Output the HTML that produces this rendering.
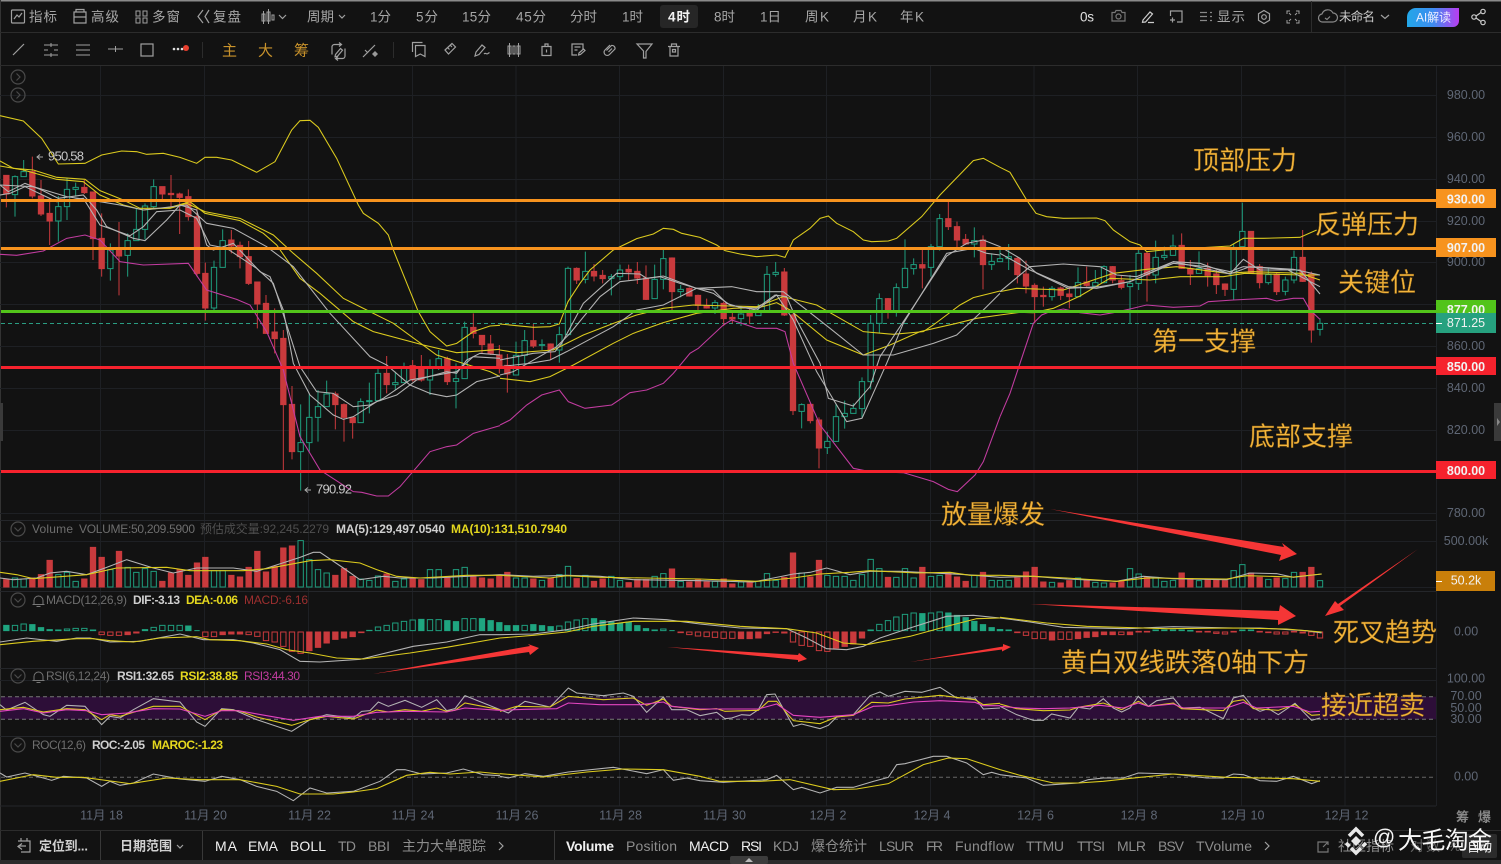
<!DOCTYPE html>
<html lang="zh"><head><meta charset="utf-8"><title>Chart</title>
<style>
html,body{margin:0;padding:0;background:#121212;overflow:hidden}
svg{display:block}
text{font-family:"Liberation Sans","Noto Sans CJK SC",sans-serif;font-size:12.5px;dominant-baseline:central}
.t{fill:#a6a6a6;font-size:13.5px}
.w{fill:#e8e8e8}
.ax{fill:#5f6775;font-size:12.5px;text-anchor:middle}
.tag{fill:#f2f2f2;font-size:12.5px;text-anchor:middle;font-weight:bold}
.lb{fill:#6e6e6e;font-size:12px}
.note{fill:#f3b53c;font-size:26px;font-family:"Noto Sans CJK SC","Liberation Sans",sans-serif;stroke:#8a5f14;stroke-width:.4px}
.b{fill:#8d8d8d;font-size:14px}
.bw{fill:#f0f0f0;font-size:14px}
.i{fill:none;stroke:#a0a0a0;stroke-width:1.2}
.gr{stroke:#1e2024;stroke-width:1;fill:none}
.r{fill:#c93a3d;stroke:#c93a3d;stroke-width:3}
.rh{fill:#121212;stroke:#c93a3d;stroke-width:3}
.gw{fill:none;stroke:#1f9d7d;stroke-width:3}
.gb{fill:#121212;stroke:#1f9d7d;stroke-width:3}
.gf{fill:#1fa580;stroke:#1fa580;stroke-width:3}
.ly{fill:none;stroke:#dccb1e;stroke-width:3.2}
.lw{fill:none;stroke:#b4b4b4;stroke-width:3.2}
.lm{fill:none;stroke:#c23ca0;stroke-width:3.2}
.lr{fill:none;stroke:#e445c0;stroke-width:3.2}
</style></head><body>
<svg width="1501" height="864" viewBox="0 0 1501 864" xmlns="http://www.w3.org/2000/svg">
<rect width="1501" height="864" fill="#121212"/>
<rect width="1501" height="1.5" fill="#8a8a8a"/>
<rect x="0" y="0" width="1" height="864" fill="#333"/>

<!-- grid -->
<path class="gr" d="M100.5 66V806M204.5 66V806M308.5 66V806M412.5 66V806M516 66V806M619.5 66V806M723.5 66V806M826.5 66V806M930.5 66V806M1034 66V806M1137.5 66V806M1241.5 66V806M1345 66V806"/>
<path class="gr" d="M0 95.5H1436M0 137.5H1436M0 179.5H1436M0 221.5H1436M0 262.5H1436M0 304.5H1436M0 346.5H1436M0 388.5H1436M0 430.5H1436M0 471.5H1436M0 513.5H1436M0 541.5H1436M0 587.5H1436M0 680.5H1436"/>
<path d="M0 520.5H1436M0 591.5H1436M0 668.5H1436M0 736.5H1436M0 806H1436" stroke="#24262a" fill="none"/>
<path d="M1436.5 66V806" stroke="#1e2024" fill="none"/>
<path d="M0 32.5H1501M0 65.5H1501M0 830.5H1501" stroke="#2c2c2c" fill="none"/>

<!-- RSI band -->
<rect x="1" y="696.7" width="1435" height="22.6" fill="#2d0e38"/>
<path d="M1 696.7H1436M1 719.3H1436" stroke="#777" stroke-dasharray="4 3" fill="none"/>
<path d="M1 777.3H1436" stroke="#666" stroke-dasharray="4 3" fill="none"/>
<path d="M1 323.5H1436" stroke="#2a9d82" stroke-dasharray="4 3" fill="none"/>

<!-- Zone A: x 0-500 y 70 -->
<g transform="translate(0,70) scale(.33333)">
<path class="r" d="M19 316V412M11 316h16v56h-16zM97 260V385M89 305h16v73h-16zM123 330V438M115 378h16v54h-16zM149 395V525M141 430h16v23h-16zM253 330V372M245 352h16v16h-16zM279 366V570M271 366h16v140h-16zM305 430V620M297 505h16v91h-16zM357 456V676M349 540h16v18h-16zM487 350V395M479 350h16v22h-16zM513 315V410M505 370h16v4h-16zM539 368V492M531 372h16v10h-16zM565 358V452M557 380h16v60h-16zM591 415V620M583 440h16v170h-16zM616 578V752M608 610h16v104h-16zM694 480V550M686 510h16v18h-16zM720 515V595M712 526h16v34h-16zM746 513V645M738 560h16v80h-16zM772 636V775M764 636h16v66h-16zM798 675V792M790 700h16v90h-16zM824 715V850M816 786h16v20h-16zM850 780V1200M842 805h16v199h-16zM876 948V1168M868 1003h16v142h-16zM1006 965V1078M998 972h16v32h-16zM1032 1000V1115M1024 1004h16v38h-16zM1058 1040V1106M1050 1042h16v16h-16zM1160 858V970M1152 910h16v34h-16zM1238 870V935M1230 887h16v43h-16zM1264 855V935M1256 895h16v35h-16zM1342 860V945M1334 866h16v69h-16zM1420 730V805M1412 772h16v18h-16zM1446 796V850M1438 796h16v28h-16zM1472 795V855M1464 822h16v28h-16zM1498 825V910M1490 855h16v40h-16z"/>
<path class="gw" d="M45 316V440M71 270V320M175 378V515M201 325V450M227 338V380M331 520V632M383 490V620M409 415V512M435 400V508M461 328V415M642 572V720M668 478V592M902 1003V1262M928 972V1145M954 960V1115M980 932V1010M1082 985V1058M1108 938V1030M1134 895V992M1186 905V960M1212 878V938M1290 868V975M1316 840V900M1368 880V1015M1394 755V926"/>
<path class="gb" d="M37 320h16v54h-16zM63 305h16v15h-16zM167 410h16v43h-16zM193 358h16v52h-16zM219 352h16v6h-16zM323 540h16v56h-16zM375 512h16v44h-16zM401 478h16v34h-16zM427 408h16v70h-16zM453 350h16v60h-16zM634 592h16v122h-16zM660 512h16v80h-16zM894 1118h16v27h-16zM920 1042h16v76h-16zM946 1010h16v32h-16zM972 972h16v38h-16zM1074 995h16v63h-16zM1100 992h16v3h-16zM1126 910h16v82h-16zM1178 938h16v6h-16zM1204 895h16v43h-16zM1282 895h16v35h-16zM1308 866h16v29h-16zM1360 926h16v8h-16zM1386 772h16v154h-16z"/>
<polyline class="lm" points="0,553 50,556 130,543 200,505 255,495 300,510 360,575 430,585 565,580 620,660 710,688 750,705 800,785 850,900 900,1100 960,1200 1060,1265 1085,1267 1130,1278 1165,1278 1200,1250 1290,1145 1340,1130 1370,1125 1420,1090 1500,1067"/>
<polyline class="ly" points="0,137 70,153 125,205 175,282 255,280 305,255 365,243 410,245 440,253 490,250 540,262 590,280 615,262 650,262 695,270 770,307 825,275 875,180 900,152 930,151 955,172 1010,265 1075,405 1090,430 1135,460 1165,495 1180,540 1255,725 1290,785 1340,828 1370,820 1420,785 1470,768 1500,766"/>
<polyline class="ly" points="0,273 40,295 100,300 170,322 255,328 300,362 370,390 420,415 510,415 560,400 615,425 720,445 760,465 820,495 880,550 950,610 1030,685 1100,720 1180,760 1310,855 1390,880 1470,905 1500,920"/>
<polyline class="ly" points="0,288 70,300 170,328 250,335 300,375 370,405 430,420 510,412 570,395 615,430 720,452 790,490 830,525 900,625 960,670 1060,755 1120,785 1270,825 1370,848 1500,838"/>
<polyline class="lw" points="0,345 25,365 75,340 125,360 175,385 250,375 290,420 320,470 400,505 435,512 500,450 540,405 590,420 620,525 640,540 700,520 780,605 810,620 850,720 880,880 930,975 1000,1035 1030,1048 1060,1040 1130,995 1190,975 1250,930 1340,905 1370,910 1400,870 1440,850 1500,855"/>
<polyline class="lw" points="0,375 30,370 75,350 170,395 250,385 300,465 390,497 430,470 470,425 540,420 590,445 630,525 680,535 770,595 820,640 900,890 950,965 1000,970 1060,1010 1110,1005 1150,985 1230,930 1340,910 1370,905 1420,860 1500,865"/>
<polyline class="lw" points="0,345 100,350 200,380 300,395 360,405 430,420 560,405 620,460 700,475 800,530 880,590 990,730 1110,860 1160,885 1230,945 1290,970 1340,980 1370,975 1430,935 1500,918"/>
</g>

<!-- Zone B: x 500-1000 y 70 -->
<g transform="translate(500,70) scale(.33333)">
<path class="r" d="M22 852V968M14 886h16v26h-16zM100 762V834M92 812h16v16h-16zM152 820V870M144 822h16v18h-16zM230 592V642M222 595h16v35h-16zM282 582V634M274 604h16v14h-16zM308 600V640M300 616h16v10h-16zM386 584V630M378 598h16v8h-16zM412 576V642M404 604h16v20h-16zM438 586V690M430 624h16v64h-16zM516 562V720M508 564h16v101h-16zM568 652V680M560 655h16v23h-16zM594 674V720M586 676h16v30h-16zM620 686V716M612 708h16v6h-16zM671 695V768M663 700h16v46h-16zM697 725V760M689 742h16v5h-16zM749 712V762M741 730h16v8h-16zM853 594V738M845 606h16v129h-16zM879 730V1035M871 735h16v287h-16zM931 1000V1060M923 1003h16v49h-16zM957 1042V1195M949 1050h16v84h-16zM1164 684V746M1156 686h16v36h-16zM1267 540V655M1259 584h16v10h-16zM1345 396V480M1337 446h16v24h-16zM1371 455V535M1363 470h16v40h-16zM1397 492V525M1389 508h16v14h-16zM1449 496V658M1441 510h16v74h-16z"/>
<path class="gw" d="M48 815V915M74 780V880M126 808V840M178 770V878M204 590V794M256 545V640M334 612V676M360 584V630M464 584V686M490 540V658M542 645V682M645 690V732M723 712V768M775 702V737M801 588V722M827 576V620M905 1000V1075M982 1085V1152M1008 1000V1114M1034 992V1076M1060 1000V1030M1086 922V1045M1112 735V958M1138 670V790M1189 640V740M1215 508V653M1241 565V614M1293 522V620M1319 432V542M1423 472V562M1475 550V600"/>
<path class="gb" d="M40 856h16v59h-16zM66 812h16v44h-16zM118 824h16v2h-16zM170 794h16v46h-16zM196 595h16v199h-16zM248 604h16v24h-16zM326 620h16v5h-16zM352 600h16v20h-16zM456 628h16v58h-16zM482 566h16v62h-16zM534 658h16v7h-16zM637 698h16v16h-16zM715 732h16v14h-16zM767 722h16v15h-16zM793 613h16v109h-16zM819 607h16v6h-16zM897 1004h16v20h-16zM974 1114h16v19h-16zM1000 1040h16v74h-16zM1026 1030h16v10h-16zM1052 1015h16v15h-16zM1078 935h16v81h-16zM1104 760h16v175h-16zM1130 686h16v74h-16zM1181 653h16v69h-16zM1207 595h16v58h-16zM1233 584h16v12h-16zM1285 530h16v62h-16zM1311 446h16v84h-16zM1415 512h16v10h-16zM1467 574h16v10h-16z"/>
<polyline class="lm" points="0,1065 30,1050 80,1005 125,975 178,960 205,995 255,1015 335,1005 390,968 440,960 490,940 520,910 570,850 595,835 670,765 695,750 770,775 830,775 855,785 880,880 960,1065 1060,1195 1110,1205 1210,1208 1300,1235 1345,1258 1372,1265 1425,1215 1450,1175 1500,1040"/>
<polyline class="ly" points="0,762 100,772 150,770 178,762 204,695 240,640 270,600 340,540 410,506 460,492 490,475 520,478 545,490 600,502 650,525 675,542 720,552 770,560 830,555 855,562 880,510 930,475 960,445 985,438 1010,460 1060,485 1090,510 1115,515 1165,513 1190,505 1265,440 1320,375 1420,272 1450,265 1500,292"/>
<polyline class="ly" points="0,840 50,848 160,840 250,795 340,760 410,735 490,715 580,705 770,710 850,680 950,705 1090,785 1180,793 1270,785 1300,765 1380,705 1420,683 1500,663"/>
<polyline class="ly" points="0,925 90,935 150,920 220,885 340,820 400,790 490,758 590,730 700,715 780,712 830,698 870,720 980,810 1090,855 1170,825 1260,785 1370,760 1430,745 1500,735"/>
<polyline class="lw" points="0,870 100,850 165,845 185,820 250,700 350,610 420,612 440,625 490,618 590,655 640,660 680,700 720,712 770,715 825,675 860,680 890,750 960,880 985,985 1060,1008 1110,950 1140,860 1240,710 1340,558 1400,520 1450,510 1500,530"/>
<polyline class="lw" points="0,915 40,905 170,830 210,790 300,680 360,635 420,628 480,620 540,640 640,670 690,705 770,720 830,675 880,750 950,905 1040,1055 1086,1045 1160,880 1210,760 1340,550 1420,535 1460,550 1500,555"/>
<polyline class="lw" points="0,890 90,880 150,870 200,845 340,770 410,720 490,705 590,655 695,650 770,665 850,665 990,775 1090,855 1180,855 1300,820 1370,795 1450,720 1500,670"/>
</g>

<!-- Zone C: x 1000+ y 70 -->
<g transform="translate(1000,70) scale(.33333)">
<path class="r" d="M52 560V640M44 565h16v49h-16zM78 572V670M70 612h16v36h-16zM104 640V760M96 646h16v34h-16zM130 650V710M122 676h16v4h-16zM182 650V690M174 654h16v22h-16zM208 650V715M200 672h16v8h-16zM260 590V650M252 636h16v10h-16zM338 588V640M330 590h16v40h-16zM364 615V658M356 632h16v20h-16zM441 545V695M433 550h16v65h-16zM545 490V597M537 526h16v69h-16zM571 570V645M563 596h16v16h-16zM623 578V650M615 596h16v20h-16zM649 600V672M641 612h16v32h-16zM675 640V678M667 642h16v16h-16zM753 484V612M745 484h16v126h-16zM779 582V655M771 590h16v48h-16zM830 606V675M822 612h16v53h-16zM908 480V636M900 562h16v72h-16zM934 605V818M926 612h16v168h-16z"/>
<path class="gw" d="M0 530V575M26 522V600M156 648V692M234 592V680M286 600V650M312 586V640M390 615V762M416 540V660M467 512V640M493 530V570M519 494V556M597 544V610M701 520V690M727 398V530M805 595V644M856 620V676M882 542V640M960 745V797"/>
<path class="gb" d="M-8 566h16v9h-16zM18 560h16v6h-16zM148 655h16v25h-16zM226 638h16v42h-16zM278 638h16v10h-16zM304 590h16v48h-16zM382 640h16v10h-16zM408 550h16v90h-16zM459 562h16v53h-16zM485 556h16v6h-16zM511 528h16v28h-16zM589 596h16v14h-16zM693 532h16v126h-16zM719 484h16v46h-16zM797 614h16v24h-16zM848 630h16v34h-16zM874 562h16v68h-16zM952 760h16v18h-16z"/>
<polyline class="lm" points="0,1040 30,970 60,880 100,760 125,735 150,725 190,717 240,728 300,735 340,728 390,717 440,705 520,712 600,708 625,695 700,690 800,685 830,693 880,685 910,685 930,720 960,748"/>
<polyline class="ly" points="0,292 30,307 80,390 108,430 140,440 190,445 290,444 315,452 340,480 390,515 420,525 440,545 490,540 690,528 730,505 790,505 900,502 950,480"/>
<polyline class="ly" points="0,665 50,655 190,660 250,640 340,610 440,598 530,590 680,610 760,605 900,610 960,630"/>
<polyline class="ly" points="0,735 60,727 100,728 160,715 240,678 330,625 450,630 540,620 670,620 735,610 900,615 960,615"/>
<polyline class="lw" points="0,530 60,565 110,610 205,655 300,650 390,635 470,600 520,575 600,580 690,612 730,568 780,600 860,600 900,600 960,672"/>
<polyline class="lw" points="0,550 90,600 205,650 290,655 390,635 520,580 620,590 690,605 730,590 860,598 960,650"/>
<polyline class="lw" points="0,665 90,590 190,582 300,590 350,615 410,620 520,575 690,612 750,590 880,598 960,615"/>
</g>

<!-- horizontal key levels -->
<rect x="1" y="199" width="1435" height="3" fill="#f7931e"/>
<rect x="1" y="247" width="1435" height="3" fill="#f7931e"/>
<rect x="1" y="310" width="1435" height="3" fill="#52c41a"/>
<rect x="1" y="366" width="1435" height="3" fill="#f5222d"/>
<rect x="1" y="470" width="1435" height="3" fill="#f5222d"/>

<!-- lower panes left -->
<g transform="translate(0,518) scale(.33333)">
<path class="r" d="M11 185h16V207H11zM89 180h16V207H89zM115 170h16V207H115zM141 127h16V207H141zM245 183h16V207H245zM271 88h16V207H271zM297 118h16V207H297zM349 100h16V207H349zM479 190h16V207H479zM505 165h16V207H505zM531 155h16V207H531zM557 172h16V207H557zM583 135h16V207H583zM608 118h16V207H608zM686 172h16V207H686zM712 177h16V207H712zM738 148h16V207H738zM764 100h16V207H764zM790 162h16V207H790zM816 145h16V207H816zM842 90h16V207H842zM868 84h16V207H868zM998 172h16V207H998zM1024 152h16V207H1024zM1050 175h16V207H1050zM1152 168h16V207H1152zM1230 183h16V207H1230zM1256 185h16V207H1256zM1334 177h16V207H1334zM1412 177h16V207H1412zM1438 180h16V207H1438zM1464 183h16V207H1464zM1490 172h16V207H1490z"/>
<path class="gb" d="M37 180h16V207H37zM63 183h16V207H63zM167 170h16V207H167zM193 163h16V207H193zM219 190h16V207H219zM323 155h16V207H323zM375 148h16V207H375zM401 163h16V207H401zM427 152h16V207H427zM453 160h16V207H453zM634 158h16V207H634zM660 158h16V207H660zM894 68h16V207H894zM920 125h16V207H920zM946 155h16V207H946zM972 165h16V207H972zM1074 183h16V207H1074zM1100 187h16V207H1100zM1126 174h16V207H1126zM1178 190h16V207H1178zM1204 183h16V207H1204zM1282 155h16V207H1282zM1308 155h16V207H1308zM1360 155h16V207H1360zM1386 148h16V207H1386z"/>
<polyline class="lw" points="0,180 40,185 110,180 150,165 200,160 260,170 320,148 380,125 460,150 520,165 590,150 700,150 770,160 900,118 940,103 960,103 1030,150 1080,185 1150,175 1200,180 1300,180 1500,170"/>
<polyline class="ly" points="0,163 50,170 100,182 260,170 350,150 500,148 570,158 730,158 800,152 930,128 990,125 1080,135 1130,155 1190,175 1260,180 1400,172 1500,172"/>
<!-- MACD -->
<path class="gf" d="M11 322h16V338H11zM89 320h16V338H89zM115 329h16V338H115zM141 335h16V338H141zM167 336h16V338H167zM271 336h16V338H271zM427 335h16V338H427zM557 324h16V338H557zM583 338h16V338H583zM1100 337h16V338H1100zM1256 304h16V338H1256zM1334 308h16V338H1334zM1360 311h16V338H1360zM1438 302h16V338H1438zM1464 308h16V338H1464zM1490 314h16V338H1490z"/>
<path class="gb" d="M37 322h16V338H37zM63 318h16V338H63zM193 333h16V338H193zM219 331h16V338H219zM245 331h16V338H245zM453 328h16V338H453zM479 322h16V338H479zM505 322h16V338H505zM531 322h16V338H531zM1126 327h16V338H1126zM1152 322h16V338H1152zM1178 315h16V338H1178zM1204 310h16V338H1204zM1230 306h16V338H1230zM1282 305h16V338H1282zM1308 305h16V338H1308zM1386 302h16V338H1386zM1412 302h16V338H1412z"/>
<path class="rh" d="M297 342h16V350H297zM323 342h16V352H323zM349 342h16V352H349zM608 342h16V356H608zM634 342h16V356H634zM738 342h16V350H738zM764 342h16V355H764zM790 342h16V368H790zM816 342h16V372H816zM842 342h16V385H842zM868 342h16V400H868zM894 342h16V406H894z"/>
<path class="r" d="M375 342h16V350H375zM401 342h16V345H401zM660 342h16V350H660zM686 342h16V348H686zM712 342h16V348H712zM920 342h16V398H920zM946 342h16V388H946zM972 342h16V375H972zM998 342h16V364H998zM1024 342h16V360H1024zM1050 342h16V356H1050zM1076 342h16V344H1076z"/>
<polyline class="lw" points="0,372 80,360 170,370 230,360 270,360 330,372 420,370 540,348 610,365 700,365 760,375 840,395 900,430 960,432 1080,424 1240,385 1340,372 1440,350 1500,350"/>
<polyline class="ly" points="0,380 100,370 230,362 280,362 330,368 400,372 480,360 590,356 630,365 720,368 800,378 860,395 930,405 1010,420 1090,423 1230,405 1340,388 1500,360"/>
<!-- RSI -->
<polyline class="lw" points="0,560 20,576 75,553 130,590 150,595 200,562 255,565 305,620 330,595 360,600 400,575 460,542 540,552 590,612 615,625 665,572 700,575 770,605 875,640 930,605 980,590 1060,600 1085,580 1110,578 1135,552 1165,565 1215,547 1265,568 1310,545 1340,578 1365,572 1395,533 1500,575"/>
<polyline class="ly" points="0,575 70,568 130,582 200,572 255,575 305,605 330,590 360,595 460,565 540,565 615,605 665,575 715,578 770,597 875,622 930,605 980,595 1060,603 1130,576 1165,582 1215,575 1265,580 1310,570 1340,580 1365,577 1395,555 1500,575"/>
<polyline class="lr" points="0,580 70,572 130,585 200,575 260,578 305,590 380,585 460,572 540,573 615,595 665,578 715,578 880,607 960,595 1060,595 1130,583 1215,580 1340,582 1395,570 1500,577"/>
<!-- ROC -->
<polyline class="lw" points="0,765 20,777 75,765 130,780 155,787 190,775 260,780 305,805 330,790 360,802 400,795 460,768 540,783 615,790 665,775 720,785 770,805 830,820 880,848 930,810 980,825 1060,820 1140,790 1190,755 1215,755 1265,768 1340,765 1390,753 1450,770 1500,773"/>
<polyline class="ly" points="0,790 100,770 170,778 250,778 390,797 500,780 600,785 720,785 830,805 900,828 1000,828 1060,822 1130,812 1220,772 1290,763 1350,768 1440,762 1500,768"/>
</g>

<!-- lower panes mid -->
<g transform="translate(500,518) scale(.33333)">
<path class="r" d="M14 163h16V207H14zM92 183h16V207H92zM144 180h16V207H144zM222 182h16V207H222zM274 190h16V207H274zM300 183h16V207H300zM378 194h16V207H378zM404 185h16V207H404zM430 185h16V207H430zM508 153h16V207H508zM560 192h16V207H560zM586 186h16V207H586zM612 192h16V207H612zM663 183h16V207H663zM689 198h16V207H689zM741 194h16V207H741zM845 178h16V207H845zM871 105h16V207H871zM923 177h16V207H923zM949 127h16V207H949zM1156 178h16V207H1156zM1259 148h16V207H1259zM1337 165h16V207H1337zM1363 177h16V207H1363zM1389 190h16V207H1389zM1441 163h16V207H1441z"/>
<path class="gb" d="M40 180h16V207H40zM66 180h16V207H66zM118 187h16V207H118zM170 170h16V207H170zM196 145h16V207H196zM248 172h16V207H248zM326 175h16V207H326zM352 187h16V207H352zM456 175h16V207H456zM482 167h16V207H482zM534 190h16V207H534zM637 190h16V207H637zM715 192h16V207H715zM767 190h16V207H767zM793 167h16V207H793zM819 187h16V207H819zM897 165h16V207H897zM974 172h16V207H974zM1000 175h16V207H1000zM1026 175h16V207H1026zM1052 187h16V207H1052zM1078 170h16V207H1078zM1104 124h16V207H1104zM1130 152h16V207H1130zM1181 178h16V207H1181zM1207 152h16V207H1207zM1233 180h16V207H1233zM1285 175h16V207H1285zM1311 172h16V207H1311zM1415 172h16V207H1415zM1467 187h16V207H1467zM1492 187h16V207H1492z"/>
<polyline class="lw" points="0,170 100,175 200,172 300,175 400,185 600,188 760,192 880,168 930,163 980,150 1050,170 1110,160 1200,160 1400,170 1500,178"/>
<polyline class="ly" points="0,172 150,180 200,173 300,178 440,180 600,183 770,190 880,180 960,168 1050,163 1110,158 1250,165 1350,163 1410,172 1500,172"/>
<!-- MACD -->
<path class="gf" d="M14 323h16V338H14zM40 323h16V338H40zM92 320h16V338H92zM118 323h16V338H118zM144 326h16V338H144zM274 302h16V338H274zM300 308h16V338H300zM326 312h16V338H326zM352 316h16V338H352zM378 312h16V338H378zM404 323h16V338H404zM430 332h16V338H430zM456 336h16V338H456zM508 338h16V338H508zM1104 336h16V338H1104zM1259 287h16V338H1259zM1337 285h16V338H1337zM1363 292h16V338H1363zM1389 299h16V338H1389zM1415 310h16V338H1415zM1441 320h16V338H1441zM1467 329h16V338H1467zM1492 335h16V338H1492z"/>
<path class="gb" d="M66 322h16V338H66zM170 324h16V338H170zM196 312h16V338H196zM222 306h16V338H222zM248 302h16V338H248zM482 333h16V338H482zM1130 319h16V338H1130zM1156 308h16V338H1156zM1181 297h16V338H1181zM1207 289h16V338H1207zM1233 285h16V338H1233zM1285 285h16V338H1285zM1311 282h16V338H1311z"/>
<path class="rh" d="M560 342h16V350H560zM586 342h16V354H586zM612 342h16V356H612zM637 342h16V358H637zM663 342h16V361H663zM689 342h16V361H689zM845 342h16V345H845zM871 342h16V372H871zM897 342h16V382H897zM923 342h16V385H923zM949 342h16V398H949zM974 342h16V400H974z"/>
<path class="r" d="M534 342h16V344H534zM715 342h16V362H715zM741 342h16V362H741zM767 342h16V360H767zM793 342h16V347H793zM819 342h16V343H819zM1000 342h16V390H1000zM1026 342h16V385H1026zM1052 342h16V378H1052zM1078 342h16V360H1078z"/>
<polyline class="lw" points="0,350 100,348 200,335 280,318 400,300 500,305 600,318 720,330 860,332 920,360 980,392 1040,395 1090,385 1140,360 1230,330 1340,295 1420,292 1500,300"/>
<polyline class="ly" points="0,360 100,352 200,342 280,325 400,310 560,310 720,325 860,332 950,345 1030,375 1100,380 1230,355 1340,325 1430,302 1500,300"/>
<!-- RSI -->
<polyline class="lw" points="0,575 25,585 75,550 150,567 205,510 230,525 310,533 370,525 400,535 440,583 490,537 515,575 560,575 600,593 650,583 675,602 695,600 725,590 750,592 775,575 800,530 825,528 880,625 905,618 960,632 985,622 1010,597 1060,590 1110,533 1140,522 1165,535 1215,520 1265,523 1320,508 1370,540 1425,540 1450,573 1500,570"/>
<polyline class="ly" points="0,580 50,565 150,567 205,535 310,545 400,540 440,562 490,543 515,565 600,575 650,572 675,580 775,577 805,550 830,550 880,608 960,617 1010,597 1060,592 1115,553 1165,555 1215,543 1320,532 1425,545 1450,560 1500,556"/>
<polyline class="lr" points="0,577 75,574 170,572 205,555 300,560 420,560 490,552 515,565 600,573 775,573 830,558 880,592 960,598 1060,590 1120,565 1165,563 1240,552 1320,548 1425,553 1450,563 1500,563"/>
<!-- ROC -->
<polyline class="lw" points="0,775 25,780 75,767 130,775 205,762 340,748 440,767 490,755 520,787 560,780 600,788 670,793 800,785 830,772 880,815 905,808 960,825 1010,808 1060,808 1120,790 1165,778 1190,740 1215,737 1300,715 1340,715 1400,735 1450,770 1475,763 1500,770"/>
<polyline class="ly" points="0,767 130,777 260,762 370,753 490,755 600,775 660,790 780,790 870,785 1000,815 1070,813 1165,797 1270,740 1345,720 1400,722 1500,755"/>
</g>

<!-- lower panes right -->
<g transform="translate(1000,518) scale(.33333)">
<path class="r" d="M44 180h16V207H44zM70 162h16V207H70zM96 148h16V207H96zM122 192h16V207H122zM174 195h16V207H174zM200 188h16V207H200zM252 185h16V207H252zM330 195h16V207H330zM356 190h16V207H356zM433 178h16V207H433zM537 165h16V207H537zM563 182h16V207H563zM615 185h16V207H615zM641 185h16V207H641zM667 188h16V207H667zM745 165h16V207H745zM771 178h16V207H771zM822 180h16V207H822zM900 163h16V207H900zM926 148h16V207H926z"/>
<path class="gb" d="M18 187h16V207H18zM148 193h16V207H148zM226 180h16V207H226zM278 193h16V207H278zM304 195h16V207H304zM382 152h16V207H382zM408 168h16V207H408zM459 178h16V207H459zM485 190h16V207H485zM511 187h16V207H511zM589 188h16V207H589zM693 158h16V207H693zM719 140h16V207H719zM797 184h16V207H797zM848 182h16V207H848zM874 163h16V207H874zM952 188h16V207H952z"/>
<polyline class="lw" points="0,178 100,175 200,183 350,190 430,175 520,182 680,185 750,165 830,167 880,178 965,168"/>
<polyline class="ly" points="0,172 100,175 200,180 350,190 440,180 680,183 740,173 880,177 965,168"/>
<!-- MACD -->
<path class="gf" d="M-8 335h16V338H-8zM18 336h16V338H18zM459 336h16V338H459zM485 336h16V338H485zM511 336h16V338H511zM537 336h16V338H537zM563 337h16V339H563zM719 336h16V338H719zM745 336h16V338H745z"/>
<path class="rh" d="M44 342h16V344H44zM70 342h16V352H70zM96 342h16V362H96zM122 342h16V362H122zM174 342h16V364H174zM200 342h16V364H200zM356 342h16V350H356zM641 342h16V346H641zM667 342h16V348H667zM822 342h16V348H822zM848 342h16V348H848zM926 342h16V352H926zM952 342h16V360H952z"/>
<path class="r" d="M148 342h16V366H148zM226 342h16V362H226zM252 342h16V358H252zM278 342h16V356H278zM304 342h16V350H304zM330 342h16V350H330zM382 342h16V350H382zM408 340h16V342H408zM433 340h16V342H433zM589 340h16V342H589zM615 340h16V342H615zM693 340h16V342H693zM771 340h16V342H771zM797 342h16V344H797zM874 340h16V342H874zM900 342h16V345H900z"/>
<polyline class="lw" points="0,300 90,312 190,328 380,332 520,326 700,330 780,330 920,338 965,345"/>
<polyline class="ly" points="0,298 140,315 260,325 500,332 700,330 860,333 965,342"/>
<!-- RSI -->
<polyline class="lw" points="0,565 50,590 100,607 130,607 155,588 210,600 235,568 270,573 310,542 340,570 365,582 390,570 415,535 445,565 470,548 520,540 545,570 600,568 670,602 700,540 730,532 760,570 780,580 805,572 835,590 885,556 935,607 960,600"/>
<polyline class="ly" points="0,558 50,572 130,578 210,576 235,568 310,555 365,575 415,550 445,565 520,555 545,572 670,578 700,550 730,545 760,572 835,577 885,560 935,592 960,590"/>
<polyline class="lr" points="0,565 60,570 130,572 210,570 300,562 370,570 415,555 445,565 520,558 550,570 680,570 730,553 770,570 880,565 930,582 960,580"/>
<!-- ROC -->
<polyline class="lw" points="0,770 80,780 130,802 235,795 265,785 310,780 370,780 415,765 520,768 620,780 670,780 700,768 730,770 780,788 830,790 880,775 935,797 960,788"/>
<polyline class="ly" points="0,755 60,772 160,795 235,795 310,790 420,778 520,768 680,778 880,782 960,790"/>
</g>

<!-- red arrows -->
<g fill="#f53636">
<polygon points="1050,509 1284,547 1282,543 1297,554 1279,561 1281,555"/>
<polygon points="1030,604 1279,611 1280,605 1296,616 1278,625 1278,620"/>
<polygon points="1418,549 1340,606 1344,610 1325,616 1335,601 1338,604"/>
<polygon points="373,674 530,646 528,644 539,648 530,655 529,652"/>
<polygon points="667,647 798,655 799,653 807,659 798,662 798,660"/>
<polygon points="910,662 1003,646.500 1003,644 1011,647 1002,651.500 1002,649.500"/>
</g>

<!-- price extremes -->
<path d="M43 157H37M40 154.5l-3 2.5 3 2.5" fill="none" stroke="#aaa"/>
<text x="48" y="156" fill="#c8c8c8" textLength="36" style="font-size:13px">950.58</text>
<path d="M311 490H305M308 487.5l-3 2.5 3 2.5" fill="none" stroke="#aaa"/>
<text x="316" y="489" fill="#c8c8c8" textLength="36" style="font-size:13px">790.92</text>

<!-- circle buttons -->
<g fill="none" stroke="#4a4a4a" stroke-width="1.2">
<circle cx="18" cy="77" r="7"/><path d="M16.5 73.5l3.5 3.5-3.5 3.5"/>
<circle cx="18" cy="95" r="7"/><path d="M16.5 91.5l3.5 3.5-3.5 3.5"/>
<circle cx="18" cy="529" r="7"/><path d="M14.5 527.5l3.5 3.5 3.5-3.5"/>
<circle cx="18" cy="600" r="7"/><path d="M14.5 598.5l3.5 3.5 3.5-3.5"/>
<circle cx="18" cy="676" r="7"/><path d="M14.5 674.5l3.5 3.5 3.5-3.5"/>
<circle cx="18" cy="745" r="7"/><path d="M14.5 743.5l3.5 3.5 3.5-3.5"/>
</g>
<g fill="none" stroke="#777" stroke-width="1">
<path d="M32.500 604.500h12M34 604.500v-4a4.500 4.500 0 0 1 9 0v4M36.500 606.500h4"/>
<path d="M32.500 680.500h12M34 680.500v-4a4.500 4.500 0 0 1 9 0v4M36.500 682.500h4"/>
</g>

<!-- pane labels -->
<text class="lb" x="32" y="529" textLength="41">Volume</text>
<text class="lb" x="79" y="529" textLength="116">VOLUME:50,209.5900</text>
<text class="lb" x="200" y="529" textLength="129" style="fill:#4f4f4f">预估成交量:92,245.2279</text>
<text class="lb" x="336" y="529" textLength="109" style="fill:#cfcfcf;font-weight:bold">MA(5):129,497.0540</text>
<text class="lb" x="451" y="529" textLength="116" style="fill:#e5d81e;font-weight:bold">MA(10):131,510.7940</text>
<text class="lb" x="46" y="600" textLength="81">MACD(12,26,9)</text>
<text class="lb" x="133" y="600" textLength="47" style="fill:#cfcfcf;font-weight:bold">DIF:-3.13</text>
<text class="lb" x="186" y="600" textLength="52" style="fill:#e5d81e;font-weight:bold">DEA:-0.06</text>
<text class="lb" x="244" y="600" textLength="64" style="fill:#9c2f2f">MACD:-6.16</text>
<text class="lb" x="46" y="676" textLength="64">RSI(6,12,24)</text>
<text class="lb" x="117" y="676" textLength="57" style="fill:#cfcfcf;font-weight:bold">RSI1:32.65</text>
<text class="lb" x="180" y="676" textLength="58" style="fill:#e5d81e;font-weight:bold">RSI2:38.85</text>
<text class="lb" x="244" y="676" textLength="56" style="fill:#c23ca0">RSI3:44.30</text>
<text class="lb" x="32" y="745" textLength="54">ROC(12,6)</text>
<text class="lb" x="92" y="745" textLength="53" style="fill:#cfcfcf;font-weight:bold">ROC:-2.05</text>
<text class="lb" x="152" y="745" textLength="71" style="fill:#e5d81e;font-weight:bold">MAROC:-1.23</text>

<!-- right axis -->
<text class="ax" x="1466" y="95">980.00</text>
<text class="ax" x="1466" y="137">960.00</text>
<text class="ax" x="1466" y="179">940.00</text>
<text class="ax" x="1466" y="221">920.00</text>
<text class="ax" x="1466" y="262">900.00</text>
<text class="ax" x="1466" y="346">860.00</text>
<text class="ax" x="1466" y="388">840.00</text>
<text class="ax" x="1466" y="430">820.00</text>
<text class="ax" x="1466" y="513">780.00</text>
<text class="ax" x="1466" y="541">500.00k</text>
<text class="ax" x="1466" y="631.500">0.00</text>
<text class="ax" x="1466" y="678.500">100.00</text>
<text class="ax" x="1466" y="696">70.00</text>
<text class="ax" x="1466" y="708">50.00</text>
<text class="ax" x="1466" y="719">30.00</text>
<text class="ax" x="1466" y="776.500">0.00</text>

<rect x="1436" y="189" width="60" height="19" fill="#f7931e"/><text class="tag" x="1466" y="199.500">930.00</text>
<rect x="1436" y="238" width="60" height="19" fill="#f7931e"/><text class="tag" x="1466" y="248">907.00</text>
<rect x="1436" y="300" width="60" height="14" fill="#52c41a"/><text class="tag" x="1466" y="310">877.00</text>
<rect x="1436" y="313" width="60" height="20" fill="#26a17f"/><text class="tag" x="1466" y="323" style="font-weight:normal">871.25</text>
<path d="M1436 323.500h6" stroke="#fff"/>
<rect x="1436" y="357" width="60" height="18" fill="#f5222d"/><text class="tag" x="1466" y="367">850.00</text>
<rect x="1436" y="461" width="60" height="18" fill="#f5222d"/><text class="tag" x="1466" y="471">800.00</text>
<rect x="1436" y="571" width="59" height="20" fill="#c97f0a"/><text class="tag" x="1466" y="580.500" style="font-weight:normal">50.2k</text>
<path d="M1436 581.500h6" stroke="#fff"/>

<!-- time axis -->
<g>
<text class="ax" x="101.500" y="815.500">11月 18</text>
<text class="ax" x="205.500" y="815.500">11月 20</text>
<text class="ax" x="309.500" y="815.500">11月 22</text>
<text class="ax" x="413" y="815.500">11月 24</text>
<text class="ax" x="517" y="815.500">11月 26</text>
<text class="ax" x="620.500" y="815.500">11月 28</text>
<text class="ax" x="724.500" y="815.500">11月 30</text>
<text class="ax" x="828" y="815.500">12月 2</text>
<text class="ax" x="932" y="815.500">12月 4</text>
<text class="ax" x="1035.500" y="815.500">12月 6</text>
<text class="ax" x="1139" y="815.500">12月 8</text>
<text class="ax" x="1242.500" y="815.500">12月 10</text>
<text class="ax" x="1346.500" y="815.500">12月 12</text>
</g>
<text x="1456" y="817" fill="#8a8a8a" style="font-size:13px;font-weight:bold">筹</text>
<text x="1478" y="817" fill="#8a8a8a" style="font-size:13px;font-weight:bold">爆</text>

<!-- annotations -->
<text class="note" x="1193" y="159" textLength="104">顶部压力</text>
<text class="note" x="1315" y="223" textLength="104">反弹压力</text>
<text class="note" x="1338" y="281" textLength="78">关键位</text>
<text class="note" x="1152" y="340" textLength="104">第一支撑</text>
<text class="note" x="1249" y="435" textLength="104">底部支撑</text>
<text class="note" x="941" y="513" textLength="104">放量爆发</text>
<text class="note" x="1333" y="631" textLength="104">死叉趋势</text>
<text class="note" x="1061" y="661" textLength="248">黄白双线跌落0轴下方</text>
<text class="note" x="1321" y="704" textLength="104">接近超卖</text>

<!-- toolbar row 1 -->
<rect x="660" y="5" width="38" height="23" rx="3" fill="#262626"/>
<g>
<rect class="i" x="11.500" y="10" width="13" height="13" rx="1"/><path class="i" d="M14 19l3-4 2 2 3-4"/>
<text class="t" x="29" y="17" textLength="28">指标</text>
<path class="i" d="M74 12h12v11H74zM74 17h12M76 12V9.500h8V12"/>
<text class="t" x="91" y="17" textLength="28">高级</text>
<path class="i" d="M136 11h4v5h-4zM143 11h4v5h-4zM136 18h4v5h-4zM143 18h4v5h-4z" style="stroke-width:1"/>
<text class="t" x="152" y="17" textLength="28">多窗</text>
<path class="i" d="M203 10l-5 6.500 5 6.500M209 10l-4 6.500 4 6.500"/>
<text class="t" x="213" y="17" textLength="28">复盘</text>
<path class="i" d="M262 14h3v7h-3zM263.500 11v13M267 12h3v9h-3zM268.500 9v15M272 15h2v5h-2z" style="stroke-width:1"/>
<path class="i" d="M279 15l3.500 3.500 3.500-3.500"/>
<text class="t" x="307" y="17" textLength="27">周期</text>
<path class="i" d="M339 15l3 3 3-3"/>
<text class="t" x="370" y="17" textLength="21">1分</text>
<text class="t" x="416" y="17" textLength="22">5分</text>
<text class="t" x="462" y="17" textLength="29">15分</text>
<text class="t" x="516" y="17" textLength="30">45分</text>
<text class="t" x="570" y="17" textLength="27">分时</text>
<text class="t" x="622" y="17" textLength="21">1时</text>
<text class="t" x="668" y="17" textLength="22" style="fill:#f2f2f2;font-weight:bold">4时</text>
<text class="t" x="714" y="17" textLength="21">8时</text>
<text class="t" x="760" y="17" textLength="21">1日</text>
<text class="t" x="805" y="17" textLength="24">周K</text>
<text class="t" x="853" y="17" textLength="24">月K</text>
<text class="t" x="900" y="17" textLength="24">年K</text>
<text class="t" x="1080" y="17" textLength="14" style="fill:#e0e0e0">0s</text>
<path class="i" d="M1112 12.500h3l1-2h5l1 2h3v8.500h-13z" style="stroke:#777"/><circle class="i" cx="1118.500" cy="16.500" r="2.500" style="stroke:#777"/>
<path class="i" d="M1143 20l7-8 2.500 2-7 8-3 .300zM1148 22.500h6" style="stroke:#ccc"/>
<path class="i" d="M1170.500 16v-5h11.500v11h-5M1170 20h5M1172.500 17.500v5"/>
<path class="i" d="M1200 12.500h7M1200 16.500h7M1200 20.500h7M1210 12.500h2M1210 16.500h2M1210 20.500h2" style="stroke:#888"/>
<text class="t" x="1217" y="17" textLength="28">显示</text>
<path class="i" d="M1264 10.500l5.500 3.200v6.600l-5.500 3.200-5.500-3.200v-6.600z"/><circle class="i" cx="1264" cy="17" r="2.300"/>
<path class="i" d="M1287 14v-3h3M1296 11h3v3M1299 20v3h-3M1290 23h-3v-3M1289 13l2 2M1297 13l-2 2M1297 21l-2-2M1289 21l2-2" style="stroke-width:1"/>
<path d="M1311.500 1V32" stroke="#2c2c2c"/>
<path class="i" d="M1323 22a4 4 0 0 1-1-8 6 6 0 0 1 11-1 4.500 4.500 0 0 1 0 9zM1325 18l2 1.500 3-3" style="stroke:#888"/>
<text class="t" x="1339" y="17" textLength="36" style="fill:#ccc;font-size:12.500px">未命名</text>
<path class="i" d="M1381 15l4 3.500 4-3.500"/>
<defs><linearGradient id="ai" x1="0" x2="1" y1="0" y2="0"><stop offset="0" stop-color="#22a7e8"/><stop offset=".5" stop-color="#3e8cf0"/><stop offset="1" stop-color="#b93df0"/></linearGradient></defs>
<path d="M1416 8h43v13a6 6 0 0 1-6 6h-46V17a9 9 0 0 1 9-9z" fill="url(#ai)"/>
<text x="1416" y="17.500" fill="#eef" style="font-size:12px" textLength="35">AI解读</text>
<g class="i" style="stroke:#ccc"><circle cx="1474" cy="17" r="2.200"/><circle cx="1483" cy="11.500" r="2.200"/><circle cx="1483" cy="22.500" r="2.200"/><path d="M1476 16l5-3.500M1476 18l5 3.500"/></g>
</g>

<!-- toolbar row 2 -->
<g>
<path class="i" d="M13 55L24 44"/>
<path class="i" d="M44 45h14M44 50h4M54 50h4M44 55h14M51 43v4M51 53v4" style="stroke-width:1"/>
<path class="i" d="M76 45h14M76 50h14M76 55h14" style="stroke-width:1"/>
<path class="i" d="M108 49h15M115.500 46v6" style="stroke-width:1"/>
<rect class="i" x="141" y="44" width="12" height="12"/>
<circle cx="174" cy="49" r="1.300" fill="#ddd"/><circle cx="178" cy="49" r="1.300" fill="#ddd"/><circle cx="182" cy="49" r="1.300" fill="#ddd"/><circle cx="186" cy="48" r="3" fill="#e8402f"/>
<path d="M202.500 42V58M393.500 42V58" stroke="#2c2c2c"/>
<text x="222" y="51" fill="#c8922b" style="font-size:15px" textLength="16">主</text>
<text x="258" y="51" fill="#c8922b" style="font-size:15px" textLength="16">大</text>
<text x="294" y="51" fill="#c8922b" style="font-size:15px" textLength="16">筹</text>
<path class="i" d="M341 44.500h-6.500a2.500 2.500 0 0 0-2.500 2.500v7.500M339 42.500l2.500 2-2.500 2M336 58.500h6.500a2.500 2.500 0 0 0 2.500-2.500v-7.500M338 56.500l-2.500 2 2.500 2M335.500 54.500l5-6 2 1.700-5 6-2.500 .500z"/>
<path class="i" d="M363 57l12-12M365 50l3 3"/><path d="M372 54l3-3 3 3-3 3z" fill="#999"/>
<path class="i" d="M412.500 52V42.500h10M415.500 45.500h9.500v11l-4.700-2.500-4.800 2.500z"/>
<path class="i" d="M445 50l7-6.500 3.500 3.500-7 7zM448 48l1.500 1.500M450.500 45.500l1.500 1.500"/>
<path class="i" d="M475 56l1-4 6-7 3 2.500-6 7zM484 54c1.500-2 2.500 1 4-.500l1.500-1"/>
<path class="i" d="M508 46h3v8h-3zM509.500 43v14M517 46h3v8h-3zM518.500 43v14M513 46h2v8h-2z" style="stroke-width:1"/>
<path class="i" d="M542 46.500h9v9h-9zM545 46.500V44h3v2.500M546.500 49.500v3"/>
<path class="i" d="M583 50v-6h-11v11h5M574.500 47h6M574.500 50h3M578.500 55l.500-2 4.500-4 1.500 1.500-4.500 4z"/>
<path class="i" d="M606.500 50.500l5-5a3 3 0 0 1 3.500 3.500l-5.500 5.500a3 3 0 0 1-4.500-4.500l5-5M608.500 52l3.500-3.500"/>
<path class="i" d="M637 44h15l-6 7.500v6.500h-2.500v-7z"/>
<path class="i" d="M668 46.500h12M671.500 46.500v-2.500h5v2.500M670 46.500v9.500h8v-9.500M672.500 49.500h3v2.500h-3z"/>
</g>

<!-- handles -->
<rect x="0" y="403" width="3" height="38" fill="#3a3a3a"/>
<rect x="1494" y="403" width="7" height="38" fill="#3a3a3a"/>
<path d="M1497 418l3 4-3 4z" fill="#888"/>

<!-- bottom bar -->
<rect x="0" y="860" width="1501" height="4" fill="#2b2b2b"/>
<rect x="730" y="856" width="38" height="8" rx="2" fill="#3c3c3c"/><path d="M745 862l4-4 4 4z" fill="#bbb"/>
<path d="M100.500 831V860M202.500 831V860M554.500 831V860" stroke="#383838"/>
<path class="i" d="M18 841h12v11H21M18 846h8M22 843.500l-4 3 4 3M21 838v3M27 838v3"/>
<text x="39" y="846" fill="#d0d0d0" style="font-size:13px;font-weight:bold" textLength="49">定位到...</text>
<text x="120" y="846" fill="#d0d0d0" style="font-size:13px;font-weight:bold" textLength="52">日期范围</text>
<path class="i" d="M177 845l3 3 3-3"/>
<text class="bw" x="215" y="846" textLength="22">MA</text>
<text class="bw" x="248" y="846" textLength="30">EMA</text>
<text class="bw" x="290" y="846" textLength="36">BOLL</text>
<text class="b" x="338" y="846" textLength="18">TD</text>
<text class="b" x="368" y="846" textLength="22">BBI</text>
<text class="b" x="402" y="846" textLength="84">主力大单跟踪</text>
<path class="i" d="M499 842l4 4-4 4"/>
<text class="bw" x="566" y="846" textLength="48" style="font-weight:bold">Volume</text>
<text class="b" x="626" y="846" textLength="51">Position</text>
<text class="bw" x="689" y="846" textLength="40">MACD</text>
<text class="bw" x="741" y="846" textLength="21">RSI</text>
<text class="b" x="773" y="846" textLength="26">KDJ</text>
<text class="b" x="811" y="846" textLength="56">爆仓统计</text>
<text class="b" x="879" y="846" textLength="35">LSUR</text>
<text class="b" x="926" y="846" textLength="17">FR</text>
<text class="b" x="955" y="846" textLength="59">Fundflow</text>
<text class="b" x="1026" y="846" textLength="38">TTMU</text>
<text class="b" x="1077" y="846" textLength="28">TTSI</text>
<text class="b" x="1117" y="846" textLength="29">MLR</text>
<text class="b" x="1158" y="846" textLength="26">BSV</text>
<text class="b" x="1196" y="846" textLength="56">TVolume</text>
<path class="i" d="M1265 842l4 4-4 4"/>
<path class="i" d="M1328 842h-10v10h10v-4M1323 847l5-5M1325 842h3v3" style="stroke:#777"/>
<text class="b" x="1338" y="846" textLength="56">社区指标</text>
<text class="b" x="1410" y="846" textLength="30" style="fill:#666">对数</text>
<text class="b" x="1448" y="846" textLength="11" style="fill:#666">%</text>
<rect x="1462" y="834" width="35" height="24" rx="2" fill="#2b2b2b"/>
<text x="1467" y="847" fill="#f0f0f0" style="font-size:13px" textLength="25">自动</text>

<!-- watermark -->
<g fill="none" stroke="#e8e8e8" stroke-width="3.500">
<path d="M1349 836l7-7 7 7"/>
<path d="M1346 843l3.500 3.500"/>
<path d="M1366 843l-3.500 3.500"/>
<path d="M1351 848l5 5 5-5"/>
</g>
<path d="M1356 836l5 5-5 5-5-5z" fill="#e8e8e8"/>
<text x="1373" y="837" fill="#f4f4f4" style="font-size:22px">@</text>
<text x="1398" y="838" fill="#f8f8f8" style="font-size:24px;font-family:'Noto Sans CJK SC','Liberation Sans',sans-serif" textLength="94">大毛淘金</text>
</svg>
</body></html>
